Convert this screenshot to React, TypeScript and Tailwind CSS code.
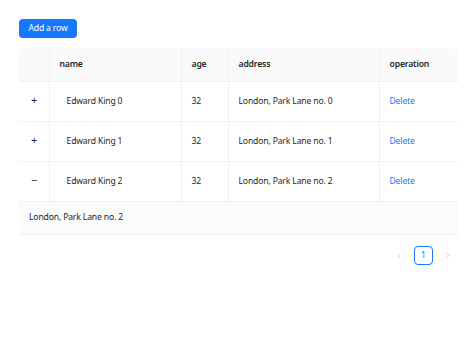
import {FC, JSX, useState} from "react";

type Row = { key: number; name: string; age: number; address: string };

const initialRows: Row[] = [0, 1, 2].map((i) => ({
  key: i,
  name: `Edward King ${i}`,
  age: 32,
  address: `London, Park Lane no. ${i}`,
}));

const cellBase = "border-b border-[#f0f0f0] px-[10px]";

const App: FC = (): JSX.Element => {
  const [rows, setRows] = useState<Row[]>(initialRows);
  const [expanded, setExpanded] = useState<number[]>([2]);

  const toggle = (key: number) =>
    setExpanded((e) => (e.includes(key) ? e.filter((k) => k !== key) : [...e, key]));

  const addRow = () => {
    const n = rows.length ? rows[rows.length - 1].key + 1 : 0;
    setRows([...rows, { key: n, name: `Edward King ${n}`, age: 32, address: `London, Park Lane no. ${n}` }]);
  };

  return (
    <div className="w-[474px] h-[339px] bg-white p-[19px] text-[8.6px] tracking-[-0.15px] text-[#262626] font-['Segoe_UI','Noto_Sans',sans-serif]">
      <button
        onClick={addRow}
        className="h-[19px] w-[58px] rounded-[4px] bg-[#1677ff] text-white text-[8.6px] leading-none"
      >
        Add a row
      </button>
      <div className="mt-[10px] w-[439px]">
        <table className="w-full border-collapse table-fixed">
          <colgroup>
            <col className="w-[30px]" />
            <col className="w-[132px]" />
            <col className="w-[47px]" />
            <col className="w-[151px]" />
            <col className="w-[79px]" />
          </colgroup>
          <thead>
            <tr className="h-[33px] bg-[#fafafa] text-left">
              <th className={`${cellBase} rounded-tl-[5px]`}></th>
              <th className={`${cellBase} border-l font-semibold`}>name</th>
              <th className={`${cellBase} border-l font-semibold`}>age</th>
              <th className={`${cellBase} border-l font-semibold`}>address</th>
              <th className={`${cellBase} border-l font-semibold rounded-tr-[5px]`}>operation</th>
            </tr>
          </thead>
          <tbody>
            {rows.map((r) => {
              const open = expanded.includes(r.key);
              return [
                <tr key={r.key} className="h-[40px]">
                  <td className={`${cellBase} text-center`}>
                    <button onClick={() => toggle(r.key)} className="text-[11px] leading-none w-[10px]">
                      {open ? "−" : "+"}
                    </button>
                  </td>
                  <td className={`${cellBase} border-l`}>
                    <span className="pl-[7px]">{r.name}</span>
                  </td>
                  <td className={`${cellBase} border-l`}>{r.age}</td>
                  <td className={`${cellBase} border-l`}>{r.address}</td>
                  <td className={`${cellBase} border-l`}>
                    <a
                      className="text-[#1677ff] cursor-pointer"
                      onClick={() => setRows(rows.filter((x) => x.key !== r.key))}
                    >
                      Delete
                    </a>
                  </td>
                </tr>,
                open && (
                  <tr key={`${r.key}-exp`} className="h-[33px] bg-[#fbfbfb]">
                    <td colSpan={5} className={cellBase}>{r.address}</td>
                  </tr>
                ),
              ];
            })}
          </tbody>
        </table>
        <div className="flex justify-end items-center gap-[5px] mt-[11px] pr-[1px]">
          <span className="w-[19px] h-[19px] flex items-center justify-center text-[#c8c8c8]">
            <svg width="7" height="7" viewBox="0 0 10 10" fill="none" stroke="currentColor" strokeWidth="1.3">
              <path d="M6.5 1.5 3 5l3.5 3.5" />
            </svg>
          </span>
          <span className="w-[19px] h-[19px] flex items-center justify-center rounded-[4px] border border-[#1677ff] text-[#1677ff]">
            1
          </span>
          <span className="w-[19px] h-[19px] flex items-center justify-center text-[#c8c8c8]">
            <svg width="7" height="7" viewBox="0 0 10 10" fill="none" stroke="currentColor" strokeWidth="1.3">
              <path d="M3.5 1.5 7 5 3.5 8.5" />
            </svg>
          </span>
        </div>
      </div>
    </div>
  );
};

export default App;
